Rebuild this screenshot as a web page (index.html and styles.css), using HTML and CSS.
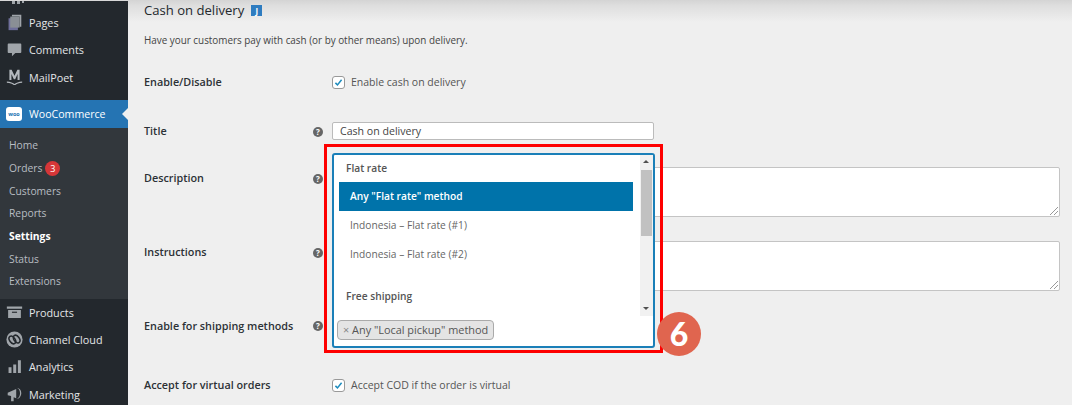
FILE: index.html
```html
<!DOCTYPE html>
<html lang="en">
<head>
<meta charset="utf-8">
<title>Cash on delivery</title>
<link rel="stylesheet" href="styles.css">
</head>
<body>
<div class="app">
  <nav class="sidebar">
    <svg class="media-cut" viewBox="0 0 14 3"><path fill="#a0a5aa" d="M1 0h3v3H1zM6 0h3v3H6zM11 0h2v2h-2z"/></svg>
    <ul class="menu menu-top">
      <li class="item"><svg class="icon" viewBox="0 0 20 20"><path fill="#a0a5aa" d="M7 1h11v14h-2V3H7z"/><path fill="#6f6f9a" d="M3 5h11v14H3z"/><path fill="#8a8f95" d="M5 3h11v13H5z"/></svg>Pages</li>
      <li class="item"><svg class="icon" viewBox="0 0 20 20"><path fill="#a0a5aa" d="M3 3h14a1 1 0 0 1 1 1v9a1 1 0 0 1-1 1h-6l-4 4v-4H3a1 1 0 0 1-1-1V4a1 1 0 0 1 1-1z"/></svg>Comments</li>
      <li class="item"><svg class="icon" viewBox="0 0 20 20"><path fill="#b4b9be" d="M4 1h2.600L10 8l3.400-7H16v12h-2.400V6l-2.800 6H9.200L6.400 6v7H4z"/><path fill="none" stroke="#b4b9be" stroke-width="1.300" d="M1 15.500c2 0 4 .5 6 1.200 1 .4 2 1.600 3 1.600s2-1.200 3-1.600c2-.7 4-1.200 6-1.200"/></svg>MailPoet</li>
    </ul>
    <div class="woo">
      <div class="item item-active"><span class="woo-logo">woo</span>WooCommerce</div>
      <ul class="submenu">
        <li class="sub">Home</li>
        <li class="sub">Orders <span class="count">3</span></li>
        <li class="sub">Customers</li>
        <li class="sub">Reports</li>
        <li class="sub sub-current">Settings</li>
        <li class="sub">Status</li>
        <li class="sub">Extensions</li>
      </ul>
    </div>
    <ul class="menu">
      <li class="item"><svg class="icon" viewBox="0 0 20 20"><path fill="#a0a5aa" d="M1 3h18v2.500H1zM2.500 7h15v9.500h-15z"/><path fill="#32373c" d="M7 9h6v1.500H7z"/></svg>Products</li>
      <li class="item"><svg class="icon" viewBox="0 0 20 20"><circle cx="10" cy="10" r="9.500" fill="#a0a5aa"/><g fill="none" stroke="#23282d" stroke-width="1.800"><ellipse cx="7.500" cy="10.500" rx="3.200" ry="5" transform="rotate(-35 7.500 10.500)"/><ellipse cx="12.500" cy="9.500" rx="3.200" ry="5" transform="rotate(-35 12.500 9.500)"/></g></svg>Channel Cloud</li>
      <li class="item"><svg class="icon" viewBox="0 0 20 20"><path fill="#a0a5aa" d="M3 11h3.500v6.500H3zM8.500 7.500H12v10H8.500zM14 2.500h3.500v15H14z"/></svg>Analytics</li>
      <li class="item"><svg class="icon" viewBox="0 0 20 20"><path fill="#a0a5aa" d="M2 8l10-4.500v11L9 13.200V18H6v-6.100L2 11z"/><path fill="#a0a5aa" d="M12.500 2a5.500 6.500 0 0 1 0 13c2.800-1 4-3.500 4-6.500s-1.200-5.500-4-6.500z"/></svg>Marketing</li>
    </ul>
  </nav>

  <main class="content">
    <div class="topshade"></div>
    <h2 class="heading">Cash on delivery <span class="backlink">J</span></h2>
    <p class="intro">Have your customers pay with cash (or by other means) upon delivery.</p>

    <div class="row row-enable">
      <div class="label">Enable/Disable</div>
      <label class="check"><span class="box"><svg viewBox="0 0 16 16"><path fill="none" stroke="#1e8cbe" stroke-width="2.200" d="M3.500 8.500l3 3 6-7.500"/></svg></span>Enable cash on delivery</label>
    </div>
    <div class="row row-title">
      <div class="label">Title</div>
      <span class="help">?</span>
      <div class="input">Cash on delivery</div>
    </div>
    <div class="row row-desc">
      <div class="label">Description</div>
      <span class="help">?</span>
      <div class="textarea"><svg class="grip" viewBox="0 0 8 8"><path stroke="#999" fill="none" d="M0 8l8-8M4 8l4-4"/></svg></div>
    </div>
    <div class="row row-instr">
      <div class="label">Instructions</div>
      <span class="help">?</span>
      <div class="textarea"><svg class="grip" viewBox="0 0 8 8"><path stroke="#999" fill="none" d="M0 8l8-8M4 8l4-4"/></svg></div>
    </div>
    <div class="row row-ship">
      <div class="label">Enable for shipping methods</div>
      <span class="help">?</span>
    </div>
    <div class="row row-virtual">
      <label class="check"><span class="box"><svg viewBox="0 0 16 16"><path fill="none" stroke="#1e8cbe" stroke-width="2.200" d="M3.500 8.500l3 3 6-7.500"/></svg></span>Accept COD if the order is virtual</label>
      <div class="label label-virtual">Accept for virtual orders</div>
    </div>

    <div class="highlight"></div>
    <div class="select">
      <div class="select-top">
        <ul class="options">
          <li class="group">Flat rate</li>
          <li class="opt opt-on">Any "Flat rate" method</li>
          <li class="opt">Indonesia – Flat rate (#1)</li>
          <li class="opt">Indonesia – Flat rate (#2)</li>
          <li class="group group-free">Free shipping</li>
        </ul>
        <div class="scrollbar">
          <span class="arrow arrow-up"></span>
          <span class="thumb"></span>
          <span class="arrow arrow-down"></span>
        </div>
      </div>
      <div class="tags"><span class="tag"><span class="tag-x">×</span> Any "Local pickup" method</span></div>
    </div>
    <div class="step">6</div>
  </main>
</div>
</body>
</html>
```
FILE: styles.css
```css
* { box-sizing: border-box; }
html, body { margin: 0; padding: 0; }
body {
  width: 1072px;
  height: 405px;
  overflow: hidden;
  background: #efefef;
  font-family: "Open Sans", "Noto Sans", sans-serif;
  font-size: 10.500px;
  color: #444;
}
ul { list-style: none; margin: 0; padding: 0; }
.app { display: flex; height: 405px; overflow: hidden; }

/* Sidebar */
.sidebar {
  width: 128px;
  flex: none;
  background: #23282d;
  color: #eee;
  border-top: 1px solid #d8d8d8;
}
.media-cut {
  display: block;
  width: 14px;
  height: 3px;
  margin: 0 0 5px 11px;
}
.menu-top { height: 91px; }
.item {
  display: flex;
  align-items: center;
  height: 27.300px;
  padding-left: 6px;
  gap: 6px;
  font-size: 10.800px;
  color: #e4e6e8;
  position: relative;
}
.icon { width: 17px; height: 17px; flex: none; }
.item-active {
  height: 28px;
  background: #2574b3;
  color: #fff;
  font-size: 10.600px;
}
.item-active::after {
  content: "";
  position: absolute;
  right: 0;
  top: 8px;
  border: 6px solid transparent;
  border-right-color: #efefef;
  border-left: 0;
}
.woo-logo {
  width: 16px;
  height: 14px;
  flex: none;
  margin-right: 1px;
  background: #fff;
  border-radius: 3px;
  color: #2574b3;
  font-size: 5.500px;
  font-weight: 700;
  line-height: 14px;
  text-align: center;
}
.submenu {
  background: #32373c;
  padding: 6px 0 8px;
  height: 170.600px;
}
.sub {
  display: flex;
  align-items: center;
  gap: 3px;
  height: 22.700px;
  padding-left: 9px;
  color: #b8bdc2;
  font-size: 10.300px;
}
.sub-current { color: #fff; font-weight: 700; }
.count {
  width: 15px;
  height: 15px;
  border-radius: 50%;
  background: #d63638;
  color: #fff;
  font-size: 9px;
  line-height: 15px;
  text-align: center;
}

/* Content */
.content {
  position: relative;
  flex: 1;
  padding-left: 16px;
  min-width: 0;
}
.topshade {
  position: absolute;
  left: 0;
  right: 0;
  top: 0;
  height: 22px;
  background: linear-gradient(#d4d4d4, #dedede 25%, #efefef);
}
.heading {
  position: relative;
  display: flex;
  align-items: center;
  gap: 7px;
  height: 20px;
  margin: 0;
  font-size: 13.100px;
  font-weight: 400;
  color: #23282d;
}
.backlink {
  width: 11px;
  height: 11px;
  background: #2e7cc0;
  color: #fff;
  font-size: 8px;
  font-weight: 700;
  line-height: 11px;
  text-align: center;
}
.intro { margin: 10px 0 0; height: 20px; line-height: 20px; font-size: 9.900px; }
.row { display: flex; align-items: flex-start; }
.label {
  width: 169px;
  flex: none;
  font-size: 10.800px;
  font-weight: 600;
  color: #2c3136;
  line-height: 20px;
}
.help {
  width: 10px;
  height: 10px;
  margin-right: 9px;
  flex: none;
  border-radius: 50%;
  background: #666;
  color: #fff;
  font-size: 8px;
  font-weight: 700;
  line-height: 10px;
  text-align: center;
}
.row-enable { margin-top: 22px; }
.row-enable .label { width: 188px; }
.row-title { margin-top: 30px; }
.row-title .help { margin-top: 5px; }
.row-title .label { line-height: 17px; }
.row-desc { margin-top: 27px; }
.row-desc .label, .row-instr .label { margin-top: 1px; }
.row-desc .help, .row-instr .help { margin-top: 7px; }
.row-instr { margin-top: 24px; }
.row-ship { margin-top: 25px; height: 20px; }
.row-ship .help { margin-top: 5px; }
.row-virtual { margin-top: 39px; flex-direction: row-reverse; justify-content: flex-end; }
.label-virtual { width: 188px; }
.input {
  width: 322px;
  height: 18px;
  padding-left: 7px;
  background: #fff;
  border: 1px solid #bbb;
  border-radius: 2px;
  line-height: 16px;
  font-size: 10.600px;
}
.textarea {
  position: relative;
  width: 728px;
  height: 50px;
  background: #fff;
  border: 1px solid #c4c4c4;
  border-radius: 2px;
}
.grip { position: absolute; right: 1px; bottom: 1px; width: 8px; height: 8px; }
.check { display: flex; align-items: center; gap: 6px; height: 20px; color: #555; }
.box {
  width: 13px;
  height: 13px;
  background: #fff;
  border: 1px solid #999;
  border-radius: 3px;
  display: flex;
}
.box svg { width: 11px; height: 11px; }

/* Overlays */
.highlight {
  position: absolute;
  left: 196px;
  top: 144px;
  width: 339px;
  height: 209px;
  border: 3px solid #fe0000;
}
.select {
  position: absolute;
  left: 204px;
  top: 153px;
  width: 323px;
  height: 195px;
  background: #fff;
  border: 2px solid #1a7fb8;
  border-radius: 3px;
  display: flex;
  flex-direction: column;
}
.select-top { display: flex; height: 161px; }
.options { flex: 1; padding: 0 7px 0 5px; }
.group {
  height: 27px;
  line-height: 27px;
  padding-left: 7px;
  font-weight: 600;
  font-size: 10.200px;
  color: #555;
}
.group-free { margin-top: 14px; }
.opt {
  height: 29px;
  line-height: 29px;
  padding-left: 11px;
  color: #666;
  font-size: 10.200px;
}
.opt-on { background: #0073aa; color: #fff; font-weight: 600; }
.scrollbar {
  position: relative;
  width: 13px;
  flex: none;
  background: #f1f1f1;
}
.thumb { position: absolute; left: 1px; right: 1px; top: 15px; height: 66px; background: #c1c1c1; }
.arrow { position: absolute; left: 3px; border: 3.500px solid transparent; }
.arrow-up { top: 5px; border-bottom-color: #505050; border-top: 0; }
.arrow-down { bottom: 6px; border-top-color: #505050; border-bottom: 0; }
.tags { padding: 4px 3px; }
.tag {
  display: inline-block;
  height: 20px;
  line-height: 18px;
  padding: 0 5px;
  background: #e4e4e4;
  border: 1px solid #aaa;
  border-radius: 4px;
  color: #555;
  font-size: 10.900px;
}
.tag-x { color: #888; }
.step {
  position: absolute;
  left: 529px;
  top: 312px;
  width: 44px;
  height: 44px;
  border-radius: 50%;
  background: #e0654f;
  color: #fff;
  font-family: "Lato", sans-serif;
  font-size: 32px;
  font-weight: 900;
  line-height: 44px;
  text-align: center;
}
```
